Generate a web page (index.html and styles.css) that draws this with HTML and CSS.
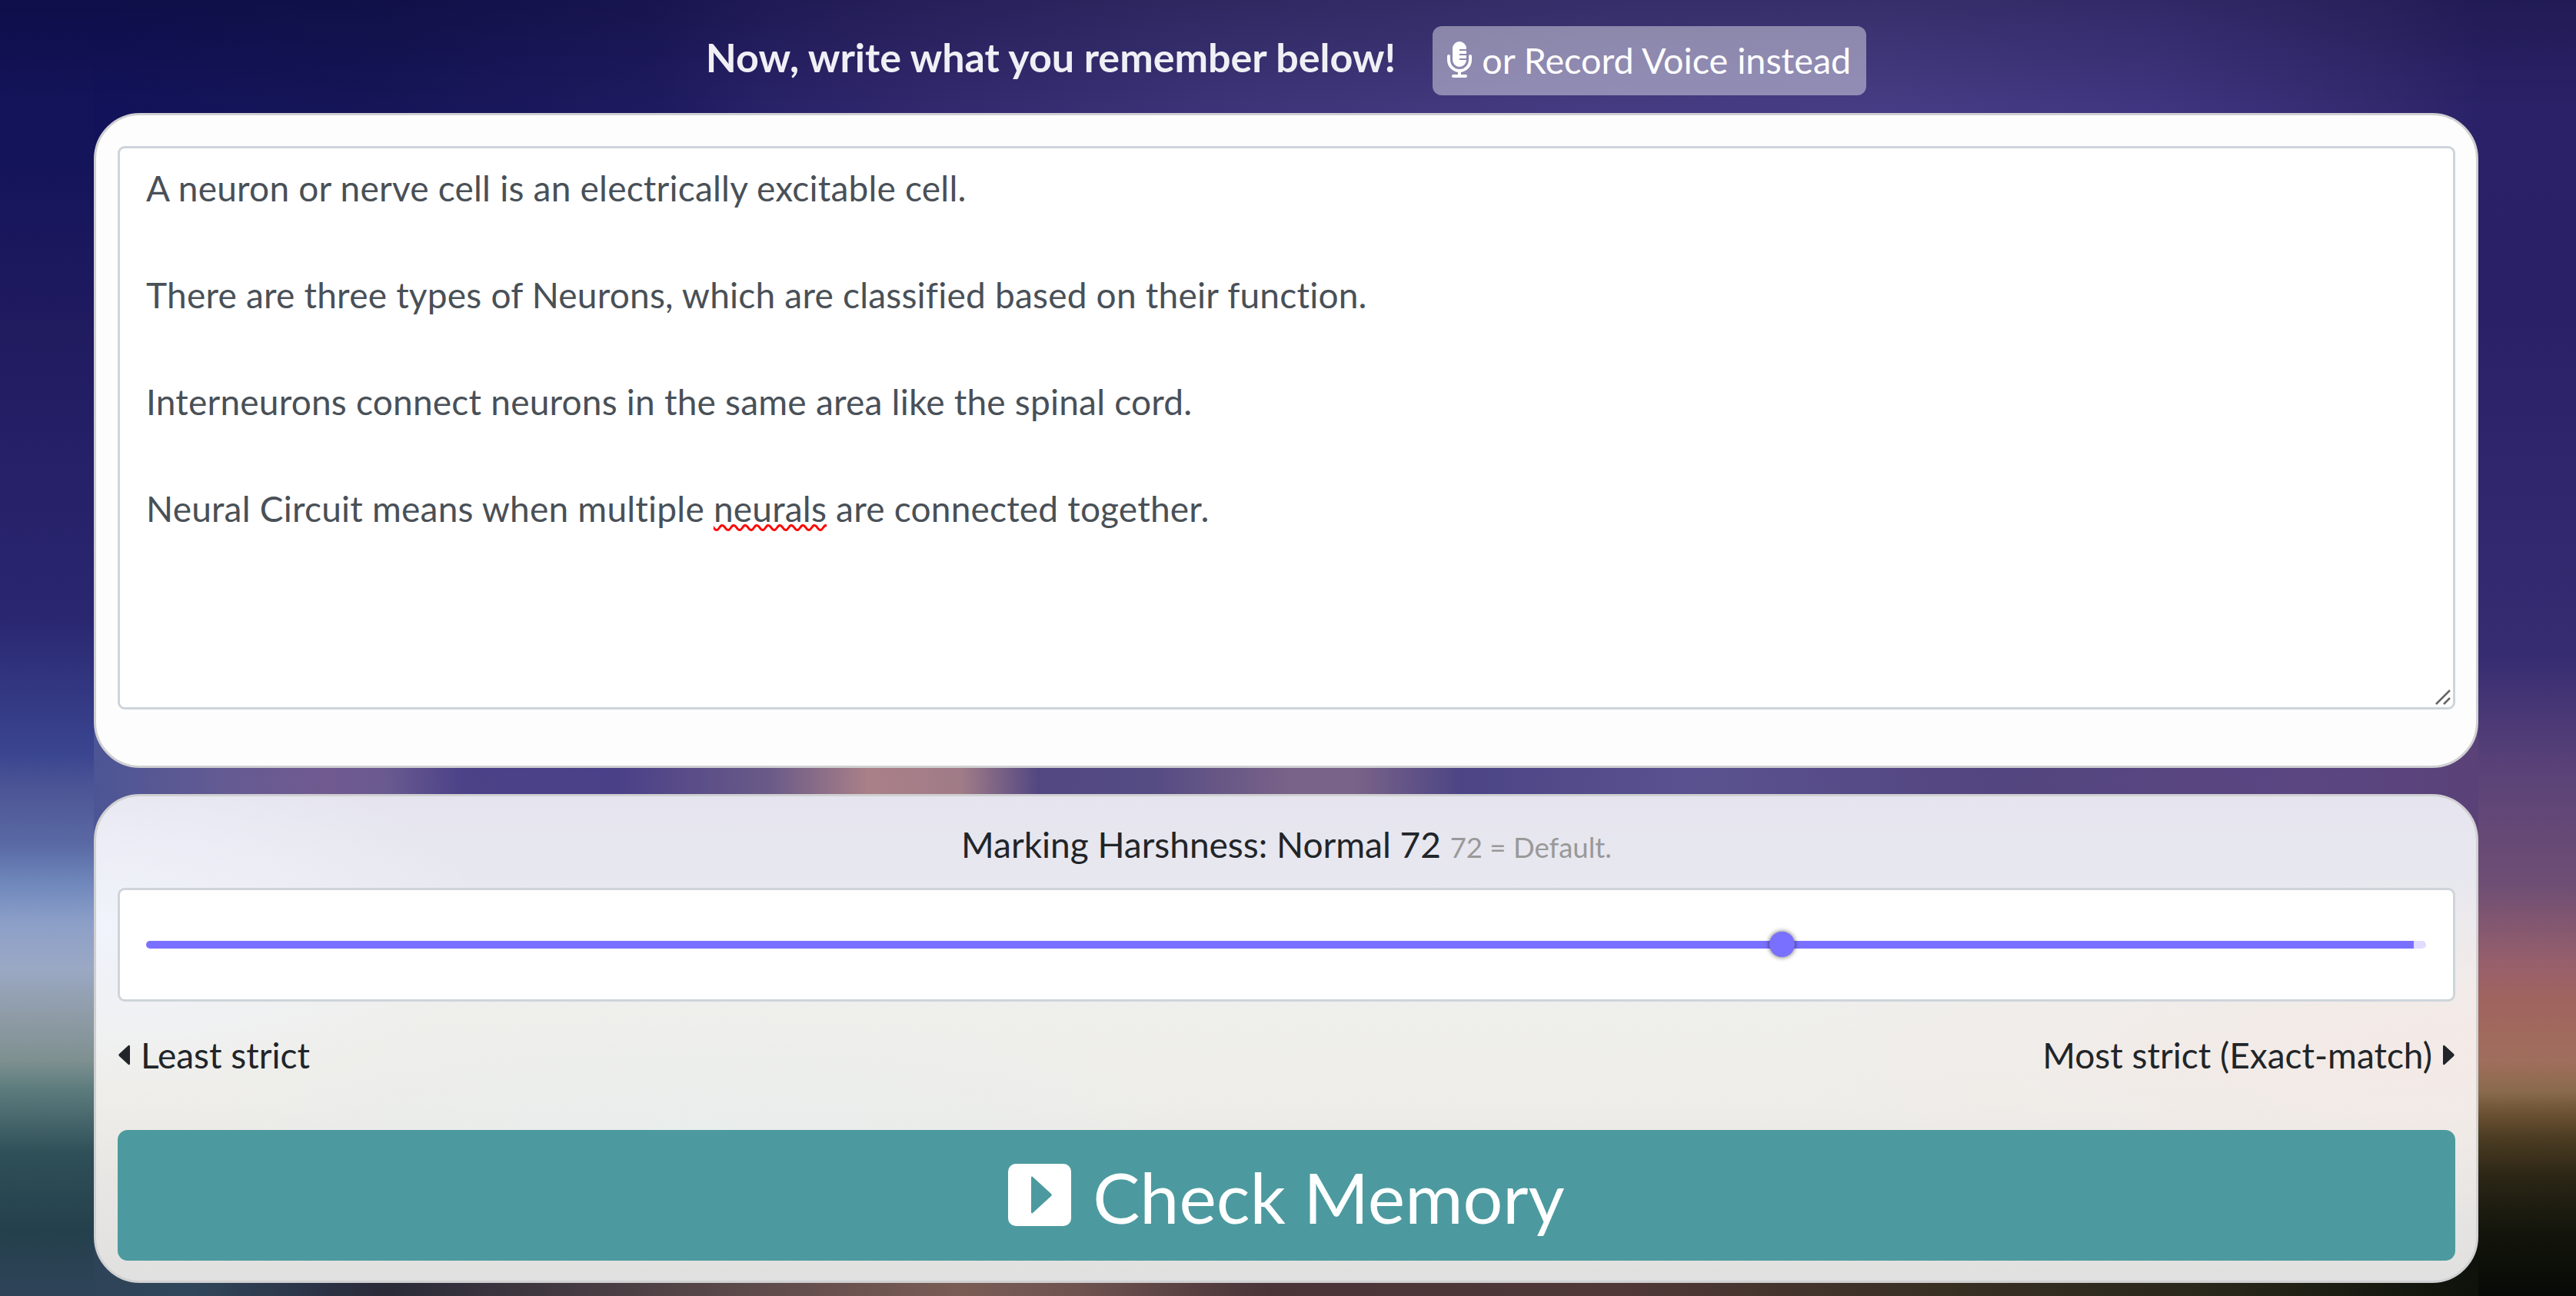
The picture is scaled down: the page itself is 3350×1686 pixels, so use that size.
FILE: index.html
```html
<!DOCTYPE html>
<html lang="en">
<head>
<meta charset="utf-8">
<title>Check Memory</title>
<link rel="stylesheet" href="styles.css">
</head>
<body>
<main class="page">
  <header class="prompt">
    <h1 class="prompt-title">Now, write what you remember below!</h1>
    <button class="voice-btn" type="button">
      <svg class="mic" viewBox="0 0 32 47" aria-hidden="true">
        <path d="M16 0a9 9 0 0 1 9 9v1h-9v2h9v4h-9v2h9v4h-9v2h9a9 9 0 0 1-18 0V9a9 9 0 0 1 9-9z"/>
        <path class="mic-line" d="M2 19v5a14 14 0 0 0 28 0v-5M16 38v7M8 45h16"/>
      </svg>
      <span>or Record Voice instead</span>
    </button>
  </header>

  <section class="panel panel-text">
    <div class="memo-wrap">
      <div class="memo">A neuron or nerve cell is an electrically excitable cell.

There are three types of Neurons, which are classified based on their function.

Interneurons connect neurons in the same area like the spinal cord.

Neural Circuit means when multiple <span class="misspelt">neurals</span> are connected together.</div>
      <svg class="grip" viewBox="0 0 20 20" aria-hidden="true"><path d="M1 19 19 1M11 19l8-8"/></svg>
    </div>
  </section>

  <section class="panel panel-controls">
    <p class="harsh-label">Marking Harshness: Normal 72 <small class="harsh-note">72 = Default.</small></p>
    <div class="slider-box">
      <input class="slider" type="range" min="0" max="100" value="72" aria-label="Marking harshness">
    </div>
    <div class="scale-ends">
      <span class="scale-end">
        <svg class="caret" viewBox="0 0 16 27" aria-hidden="true"><path d="M14 1 2 12a2 2 0 0 0 0 3l12 11a1.500 1.500 0 0 0 2-1V2a1.500 1.500 0 0 0-2-1z"/></svg>
        Least strict
      </span>
      <span class="scale-end">
        Most strict (Exact-match)
        <svg class="caret" viewBox="0 0 16 27" aria-hidden="true"><path d="M2 1l12 11a2 2 0 0 1 0 3L2 26a1.500 1.500 0 0 1-2-1V2a1.500 1.500 0 0 1 2-1z"/></svg>
      </span>
    </div>
    <button class="check-btn" type="button">
      <svg class="play" viewBox="0 0 82 81" aria-hidden="true"><path fill-rule="evenodd" d="M10 0h62a10 10 0 0 1 10 10v61a10 10 0 0 1-10 10H10A10 10 0 0 1 0 71V10A10 10 0 0 1 10 0zM32 17c-1-1-2 0-2 1v45c0 1 1 2 2 1l24-22c1-1 1-2 0-3z"/></svg>
      <span class="check-label">Check Memory</span>
    </button>
  </section>
</main>
</body>
</html>
```

FILE: styles.css
```css
* { box-sizing: border-box; }

html, body { margin: 0; height: 100%; }

html { background: #332c70; }

body {
  height: 1686px;
  overflow: hidden;
  font-family: "Lato", "Liberation Sans", sans-serif;
  font-variant-ligatures: none;
  color: #212529;
  background:
    linear-gradient(to bottom, rgba(0, 0, 16, .22) 0, rgba(0, 0, 16, 0) 140px) 0 0 / 3350px 140px no-repeat,
    linear-gradient(to right, #12125a 0, #151558 378px, #1e1a60 728px, #282268 878px, #33296e 1128px, #3c3478 1478px, #453b82 1978px, #463c84 2328px, #3f3580 2678px, #32296e 2978px, #2a2268 3101px) 122px 0 / 3101px 210px no-repeat,
    linear-gradient(to right, #4c5595 0, #655b92 178px, #705a90 300px, #6a5a90 378px, #4c4288 478px, #4a4088 678px, #6a5a88 878px, #aa8088 1008px, #a07c88 1128px, #534782 1228px, #554c84 1378px, #7a6388 1558px, #7a6388 1638px, #4c4585 1778px, #5a5290 2078px, #53457f 2478px, #5b4682 2878px, #5a4278 3101px) 122px 940px / 3101px 155px no-repeat,
    linear-gradient(to right, #2e4358 0, #30465a 128px, #2c3448 278px, #2a2a38 378px, #7a5c55 1128px, #6e5350 1278px, #4a3438 1528px, #503838 1978px, #3a3024 2378px, #28261a 2778px, #0d120a 3101px) 122px 1610px / 3101px 76px no-repeat,
    linear-gradient(to bottom, #12125a 0, #14145a 210px, #211b60 430px, #2a2670 800px, #3a4590 980px, #4c5595 1025px, #5a6aa5 1100px, #7088bc 1150px, #8c9fc8 1200px, #9aa8c4 1260px, #8f9ca8 1320px, #7e9090 1380px, #5a7a7c 1420px, #2f5058 1500px, #24404c 1600px, #2e4358 1680px) 0 0 / 122px 100% no-repeat,
    linear-gradient(to bottom, #2a2268 0, #2a2068 400px, #362c72 850px, #5a4278 1000px, #6e4e74 1150px, #965f6c 1250px, #a0645f 1300px, #a06e5c 1380px, #8a6a4c 1420px, #6a5032 1450px, #4c3c22 1480px, #2c2616 1530px, #14160c 1600px, #070a06 1686px) 3223px 0 / 127px 100% no-repeat;
}

.page {
  display: flex;
  flex-direction: column;
  padding: 34px 127px 0 122px;
}

.prompt {
  display: flex;
  justify-content: center;
  align-items: center;
  gap: 48px;
  height: 90px;
  margin-bottom: 23px;
}

.prompt-title {
  margin: 0 0 10px;
  font-size: 52px;
  font-weight: 700;
  line-height: 1.2;
  color: #f0eff5;
}

.voice-btn {
  display: flex;
  align-items: center;
  gap: 13px;
  height: 90px;
  padding: 0 20px 3px 19px;
  border: 0;
  border-radius: 12px;
  font: inherit;
  font-size: 46.700px;
  color: #fff;
  background: rgba(255, 255, 255, .42);
}

.mic { width: 32px; height: 47px; fill: #fff; }
.mic-line { fill: none; stroke: #fff; stroke-width: 4; stroke-linecap: round; }

.panel {
  border: 3px solid #d0d0d2;
  border-radius: 60px;
}

.panel-text {
  height: 852px;
  margin-bottom: 34px;
  padding: 40px 27px 0 28px;
  background: #fdfdfd;
}

.memo-wrap { position: relative; }

.memo {
  height: 733px;
  padding: 17px 34px;
  border: 3px solid #ced4da;
  border-radius: 9px;
  background: #fff;
  font-size: 46px;
  letter-spacing: .22px;
  line-height: 69.500px;
  color: #495057;
  white-space: pre-wrap;
}

.misspelt {
  text-decoration: underline wavy #f00 3px;
  text-underline-offset: 3px;
  text-decoration-skip-ink: none;
}

.grip {
  position: absolute;
  right: 6px;
  bottom: 6px;
  width: 20px;
  height: 20px;
  fill: none;
  stroke: #666;
  stroke-width: 2.500;
}

.panel-controls {
  display: flex;
  flex-direction: column;
  height: 636px;
  padding: 28px 27px 26px 28px;
  background:
    radial-gradient(ellipse 520px 220px at 0 170px, rgba(241, 244, 252, .95) 0, rgba(241, 244, 252, 0) 100%),
    radial-gradient(ellipse 900px 220px at 100% 330px, rgba(244, 233, 230, .95) 0, rgba(244, 233, 230, 0) 100%),
    radial-gradient(ellipse 700px 160px at 25% 440px, rgba(232, 238, 238, .8) 0, rgba(232, 238, 238, 0) 100%),
    linear-gradient(to bottom, #e6e5ef 0, #e8e8ef 130px, #efefec 280px, #eeede9 400px, #e8e6e3 500px, #e0e0e0 636px);
}

.harsh-label {
  margin: 0 0 21px;
  text-align: center;
  font-size: 46px;
  line-height: 70px;
}

.harsh-note { font-size: 36.500px; line-height: 1; color: #999; }

.slider-box {
  display: flex;
  align-items: center;
  height: 148px;
  padding: 0 35px 0 34px;
  border: 3px solid #ced4da;
  border-radius: 9px;
  background: #fff;
}

.slider {
  width: 100%;
  height: 40px;
  margin: 0;
  appearance: none;
  -webkit-appearance: none;
  background: transparent;
}

.slider::-webkit-slider-runnable-track {
  height: 10px;
  border-radius: 5px;
  background: linear-gradient(to right, #7a70ff 2949px, #e0dcff 2949px);
}

.slider::-webkit-slider-thumb {
  -webkit-appearance: none;
  width: 33px;
  height: 33px;
  margin-top: -11.500px;
  border-radius: 50%;
  background: #7a70ff;
  box-shadow: 0 0 6px rgba(0, 0, 0, .65);
}

.scale-ends {
  display: flex;
  justify-content: space-between;
  margin: 35px 0 62px;
  font-size: 46px;
  line-height: 70px;
}

.scale-end { display: flex; align-items: center; gap: 14px; }

.caret { width: 16px; height: 27px; fill: #212529; }

.check-btn {
  display: flex;
  justify-content: center;
  align-items: center;
  gap: 28px;
  height: 171px;
  border: 0;
  border-radius: 13px;
  font: inherit;
  font-size: 91.500px;
  color: #fff;
  background: #4c9a9f;
}

.check-label { padding-top: 3px; }

.play { width: 82px; height: 81px; fill: #fff; }
```
